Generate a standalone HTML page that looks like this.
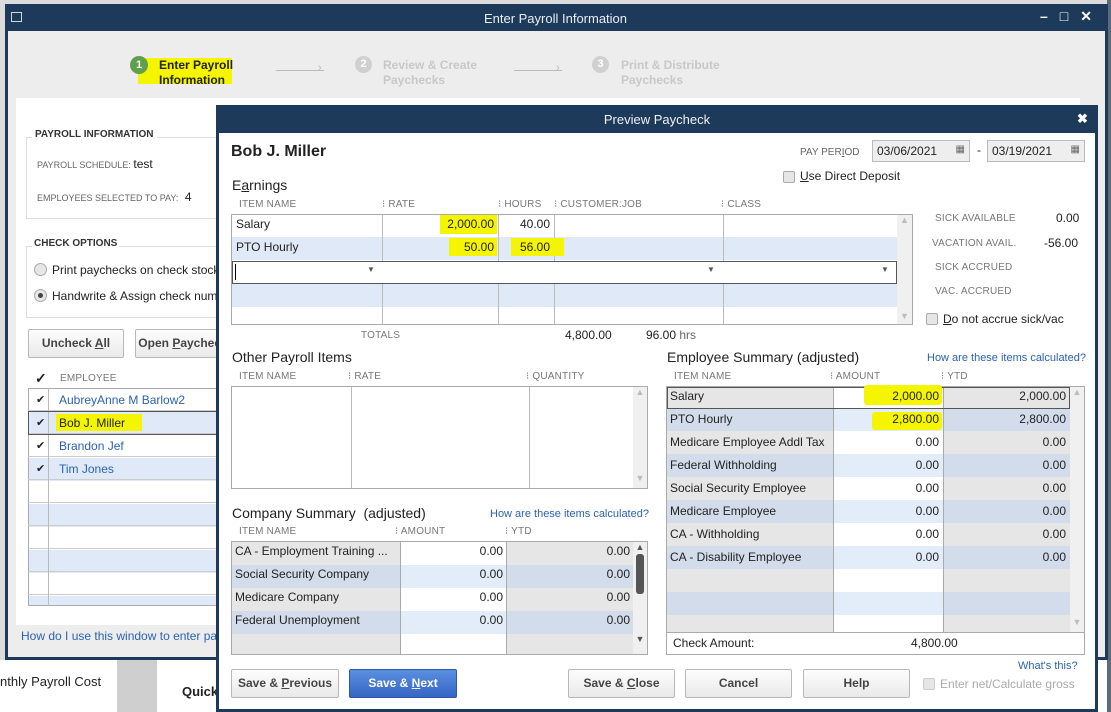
<!DOCTYPE html>
<html><head><meta charset="utf-8"><style>
*{box-sizing:border-box;margin:0;padding:0}
body{width:1111px;height:712px;overflow:hidden;position:relative;background:#e8e8e8;font-family:"Liberation Sans",sans-serif;font-size:12px;color:#222}
.a{position:absolute}
.nv{background:#1d3a5b}
.hl{background:#f5f500}
.hd{position:absolute;font-size:10px;color:#777;letter-spacing:.2px}
.btn{position:absolute;height:29px;border:1px solid #b8b8b8;background:linear-gradient(#fdfdfd,#e9e9e9);font-weight:bold;color:#444;font-size:12px;text-align:center;line-height:27px;border-radius:2px}
.r{position:absolute;height:23px;line-height:23px;font-size:12px}
.lnk{color:#2a62b0}
.cb{position:absolute;width:12px;height:12px;border:1px solid #aaa;background:#e6e6e6;border-radius:2px}
</style></head><body>
<div class="a" style="left:0;top:0;width:1111px;height:712px;background:#dcdcdc"></div>
<div class="a" style="left:0;top:660px;width:1111px;height:52px;background:#fff"></div>
<div class="a" style="left:0;top:674px;font-size:13px">nthly Payroll Cost</div>
<div class="a" style="left:117px;top:660px;width:40px;height:52px;background:#cfcfcf"></div>
<div class="a" style="left:182px;top:684px;font-weight:bold;font-size:13px">Quick</div>
<div class="a" style="left:1107px;top:0;width:4px;height:712px;background:#5b6b7b"></div>
<div class="a nv" style="left:5px;top:4px;width:1103px;height:656px"></div>
<div class="a" style="left:8px;top:31px;width:1097px;height:626px;background:#ededed"></div>
<div class="a" style="left:11px;top:12px;width:11px;height:10px;border:1px solid #cfd6de"></div>
<div class="a" style="left:0;top:11px;width:1111px;text-align:center;color:#e8eef5;font-size:13px">Enter Payroll Information</div>
<div class="a" style="left:1040px;top:8px;color:#fff;font-size:14px;letter-spacing:12px;font-weight:bold">–□✕</div>
<div class="a hl" style="left:138px;top:58px;width:94px;height:26px"></div>
<div class="a" style="left:130px;top:56px;width:18px;height:18px;border-radius:50%;background:#5fa04a;color:#fff;font-weight:bold;text-align:center;line-height:18px;font-size:11px">1</div>
<div class="a" style="left:159px;top:58px;font-weight:bold;font-size:12px;line-height:15px">Enter Payroll<br>Information</div>
<div class="a" style="left:276px;top:70px;width:48px;height:1px;background:#bbb"></div>
<div class="a" style="left:318px;top:62px;color:#bbb;font-size:11px">›</div>
<div class="a" style="left:355px;top:56px;width:17px;height:17px;border-radius:50%;background:#d0d0d0;color:#fff;font-weight:bold;text-align:center;line-height:17px;font-size:11px">2</div>
<div class="a" style="left:383px;top:58px;font-weight:bold;color:#c8c8c8;line-height:15px">Review &amp; Create<br>Paychecks</div>
<div class="a" style="left:514px;top:70px;width:48px;height:1px;background:#bbb"></div>
<div class="a" style="left:556px;top:62px;color:#bbb;font-size:11px">›</div>
<div class="a" style="left:592px;top:56px;width:17px;height:17px;border-radius:50%;background:#d0d0d0;color:#fff;font-weight:bold;text-align:center;line-height:17px;font-size:11px">3</div>
<div class="a" style="left:621px;top:58px;font-weight:bold;color:#c8c8c8;line-height:15px">Print &amp; Distribute<br>Paychecks</div>
<div class="a" style="left:16px;top:98px;width:1064px;height:527px;background:#fff"></div>
<div class="a" style="left:26px;top:137px;width:200px;height:82px;border:1px solid #ddd"></div>
<div class="a" style="left:32px;top:129px;background:#fff;padding:0 3px;font-size:10px;font-weight:bold;color:#333">PAYROLL INFORMATION</div>
<div class="a" style="left:37px;top:157px;font-size:9px;color:#666">PAYROLL SCHEDULE: <span style="font-size:12px;color:#222">test</span></div>
<div class="a" style="left:37px;top:190px;font-size:9px;color:#666">EMPLOYEES SELECTED TO PAY: <span style="font-size:12px;color:#222;margin-left:4px">4</span></div>
<div class="a" style="left:26px;top:246px;width:200px;height:72px;border:1px solid #ddd"></div>
<div class="a" style="left:32px;top:238px;background:#fff;padding:0 2px;font-size:10px;font-weight:bold;color:#333">CHECK OPTIONS</div>
<div class="a" style="left:34px;top:263px;width:13px;height:13px;border-radius:50%;border:1px solid #aaa;background:#e6e6e6"></div>
<div class="a" style="left:52px;top:263px">Print paychecks on check stock</div>
<div class="a" style="left:34px;top:289px;width:13px;height:13px;border-radius:50%;border:1px solid #aaa;background:#e6e6e6"><div style="margin:3px;width:5px;height:5px;border-radius:50%;background:#444"></div></div>
<div class="a" style="left:52px;top:289px">Handwrite &amp; Assign check numbers</div>
<div class="btn" style="left:28px;top:329px;width:96px">Uncheck <u>A</u>ll</div>
<div class="btn" style="left:135px;top:329px;width:96px">Open <u>P</u>aycheck</div>
<div class="a" style="left:35px;top:370px;font-weight:bold;font-size:14px">✓</div>
<div class="hd" style="left:60px;top:373px">EMPLOYEE</div>
<div class="a" style="left:28px;top:388px;width:190px;height:218px;border:1px solid #aaa;background:repeating-linear-gradient(#fff 0 23px,#dfe9f7 23px 46px)"></div>
<div class="a" style="left:28px;top:388px;width:190px;height:218px;background:repeating-linear-gradient(transparent 0 22px,#ccc 22px 23px)"></div>
<div class="a" style="left:48px;top:388px;width:1px;height:218px;background:#bbb"></div>
<div class="a" style="left:28px;top:411px;width:190px;height:24px;border:1px solid #555"></div>
<div class="a hl" style="left:56px;top:414px;width:86px;height:17px"></div>
<div class="r" style="left:36px;top:389px;font-size:11px">✔</div><div class="r lnk" style="left:59px;top:389px">AubreyAnne M Barlow2</div>
<div class="r" style="left:36px;top:412px;font-size:11px">✔</div><div class="r" style="left:59px;top:412px">Bob J. Miller</div>
<div class="r" style="left:36px;top:435px;font-size:11px">✔</div><div class="r lnk" style="left:59px;top:435px">Brandon Jef</div>
<div class="r" style="left:36px;top:458px;font-size:11px">✔</div><div class="r lnk" style="left:59px;top:458px">Tim Jones</div>
<div class="a lnk" style="left:21px;top:629px">How do I use this window to enter paychecks?</div>
<div class="a nv" style="left:216px;top:105px;width:882px;height:607px"></div>
<div class="a" style="left:219px;top:133px;width:876px;height:576px;background:#fff"></div>
<div class="a" style="left:216px;top:112px;width:882px;text-align:center;color:#eef2f7;font-size:13px">Preview Paycheck</div>
<div class="a" style="left:1077px;top:111px;color:#fff;font-weight:bold;font-size:13px">✖</div>
<div class="a" style="left:231px;top:143px;font-weight:bold;font-size:16px">Bob J. Miller</div>
<div class="a" style="left:800px;top:147px;font-size:10px;color:#666">PAY PER<u>I</u>OD</div>
<div class="a" style="left:872px;top:140px;width:98px;height:22px;border:1px solid #bbb;background:#eee;padding:3px 4px;font-size:12px">03/06/2021 <span style="float:right;color:#666;font-size:10px">▦</span></div>
<div class="a" style="left:977px;top:143px">-</div>
<div class="a" style="left:987px;top:140px;width:98px;height:22px;border:1px solid #bbb;background:#eee;padding:3px 4px;font-size:12px">03/19/2021 <span style="float:right;color:#666;font-size:10px">▦</span></div>
<div class="cb" style="left:783px;top:171px"></div>
<div class="a" style="left:800px;top:169px"><u>U</u>se Direct Deposit</div>
<div class="a" style="left:232px;top:177px;font-size:14px">E<u>a</u>rnings</div>
<div class="hd" style="left:239px;top:199px">ITEM NAME</div>
<div class="hd" style="left:382px;top:199px">⁝ RATE</div>
<div class="hd" style="left:498px;top:199px">⁝ HOURS</div>
<div class="hd" style="left:554px;top:199px">⁝ CUSTOMER:JOB</div>
<div class="hd" style="left:721px;top:199px">⁝ CLASS</div>
<div class="a" style="left:231px;top:214px;width:682px;height:111px;border:1px solid #aaa;background:#fff"></div>
<div class="a" style="left:232px;top:237px;width:665px;height:23px;background:#dfe9f7"></div>
<div class="a" style="left:232px;top:284px;width:665px;height:23px;background:#dfe9f7"></div>
<div class="a" style="left:382px;top:215px;width:1px;height:109px;background:#bbb"></div>
<div class="a" style="left:498px;top:215px;width:1px;height:109px;background:#bbb"></div>
<div class="a" style="left:554px;top:215px;width:1px;height:109px;background:#bbb"></div>
<div class="a" style="left:723px;top:215px;width:1px;height:109px;background:#bbb"></div>
<div class="a" style="left:897px;top:215px;width:15px;height:109px;background:#f0f0f0;color:#bbb;font-size:9px;text-align:center">▲<div style="margin-top:86px">▼</div></div>
<div class="a" style="left:232px;top:261px;width:665px;height:23px;border:1px solid #555;background:#fff"></div>
<div class="a" style="left:235px;top:264px;width:1px;height:16px;background:#000"></div>
<div class="a" style="left:367px;top:265px;font-size:8px;color:#555">▼</div>
<div class="a" style="left:707px;top:265px;font-size:8px;color:#555">▼</div>
<div class="a" style="left:881px;top:265px;font-size:8px;color:#555">▼</div>
<div class="a hl" style="left:440px;top:215px;width:57px;height:19px"></div>
<div class="a hl" style="left:449px;top:238px;width:48px;height:18px"></div>
<div class="a hl" style="left:511px;top:238px;width:53px;height:18px"></div>
<div class="r" style="left:236px;top:213px">Salary</div>
<div class="r" style="left:382px;top:213px;width:112px;text-align:right">2,000.00</div>
<div class="r" style="left:498px;top:213px;width:52px;text-align:right">40.00</div>
<div class="r" style="left:236px;top:236px">PTO Hourly</div>
<div class="r" style="left:382px;top:236px;width:112px;text-align:right">50.00</div>
<div class="r" style="left:498px;top:236px;width:52px;text-align:right">56.00</div>
<div class="hd" style="left:361px;top:330px">TOTALS</div>
<div class="a" style="left:565px;top:328px">4,800.00</div>
<div class="a" style="left:646px;top:328px">96.00 <span style="color:#666">hrs</span></div>
<div class="hd" style="left:935px;top:213px">SICK AVAILABLE</div><div class="a" style="left:1056px;top:211px">0.00</div>
<div class="hd" style="left:932px;top:238px">VACATION AVAIL.</div><div class="a" style="left:1044px;top:236px">-56.00</div>
<div class="hd" style="left:935px;top:262px">SICK ACCRUED</div>
<div class="hd" style="left:935px;top:286px">VAC. ACCRUED</div>
<div class="cb" style="left:926px;top:313px"></div>
<div class="a" style="left:943px;top:312px"><u>D</u>o not accrue sick/vac</div>
<div class="a" style="left:232px;top:349px;font-size:14px">Other Payroll Items</div>
<div class="hd" style="left:239px;top:371px">ITEM NAME</div>
<div class="hd" style="left:348px;top:371px">⁝ RATE</div>
<div class="hd" style="left:526px;top:371px">⁝ QUANTITY</div>
<div class="a" style="left:231px;top:386px;width:417px;height:103px;border:1px solid #aaa"></div>
<div class="a" style="left:351px;top:387px;width:1px;height:101px;background:#bbb"></div>
<div class="a" style="left:529px;top:387px;width:1px;height:101px;background:#bbb"></div>
<div class="a" style="left:633px;top:387px;width:14px;height:101px;background:#f0f0f0;color:#bbb;font-size:9px;text-align:center">▲<div style="margin-top:76px">▼</div></div>
<div class="a" style="left:232px;top:505px;font-size:14px">Company Summary &nbsp;(adjusted)</div>
<div class="a lnk" style="left:490px;top:508px;font-size:11px">How are these items calculated?</div>
<div class="hd" style="left:239px;top:526px">ITEM NAME</div>
<div class="hd" style="left:395px;top:526px">⁝ AMOUNT</div>
<div class="hd" style="left:505px;top:526px">⁝ YTD</div>
<div class="a" style="left:231px;top:541px;width:417px;height:114px;border:1px solid #aaa;background:#e6e6e6"></div>
<div class="a" style="left:232px;top:565px;width:401px;height:23px;background:#d3dcea"></div>
<div class="a" style="left:232px;top:611px;width:401px;height:23px;background:#d3dcea"></div>
<div class="a" style="left:400px;top:542px;width:107px;height:112px;background:#fff;border-left:1px solid #aaa;border-right:1px solid #aaa"></div>
<div class="a" style="left:401px;top:565px;width:105px;height:23px;background:#e3edf9"></div>
<div class="a" style="left:401px;top:611px;width:105px;height:23px;background:#e3edf9"></div>
<div class="a" style="left:633px;top:542px;width:14px;height:112px;background:#f0f0f0;color:#555;font-size:9px;text-align:center">▲<div style="margin:2px 3px;height:40px;background:#555;border-radius:3px"></div><div style="margin-top:40px">▼</div></div>
<div class="r" style="left:235px;top:540px">CA - Employment Training ...</div>
<div class="r" style="left:235px;top:563px">Social Security Company</div>
<div class="r" style="left:235px;top:586px">Medicare Company</div>
<div class="r" style="left:235px;top:609px">Federal Unemployment</div>
<div class="r" style="left:400px;top:540px;width:103px;text-align:right;line-height:23px">0.00<br>0.00<br>0.00<br>0.00</div>
<div class="r" style="left:507px;top:540px;width:123px;text-align:right;line-height:23px">0.00<br>0.00<br>0.00<br>0.00</div>
<div class="a" style="left:667px;top:349px;font-size:14px">Employee Summary (adjusted)</div>
<div class="a lnk" style="left:927px;top:352px;font-size:11px">How are these items calculated?</div>
<div class="hd" style="left:674px;top:371px">ITEM NAME</div>
<div class="hd" style="left:830px;top:371px">⁝ AMOUNT</div>
<div class="hd" style="left:941px;top:371px">⁝ YTD</div>
<div class="a" style="left:666px;top:386px;width:419px;height:269px;border:1px solid #aaa;background:#e6e6e6"></div>
<div class="a" style="left:667px;top:408px;width:403px;height:224px;background:repeating-linear-gradient(#d3dcea 0 23px,#e6e6e6 23px 46px)"></div>
<div class="a" style="left:833px;top:387px;width:111px;height:245px;background:#fff;border-left:1px solid #aaa;border-right:1px solid #aaa"></div>
<div class="a" style="left:834px;top:408px;width:109px;height:224px;background:repeating-linear-gradient(#e3edf9 0 23px,#fff 23px 46px)"></div>
<div class="a" style="left:667px;top:387px;width:403px;height:22px;border:1px solid #555"></div>
<div class="a" style="left:1070px;top:387px;width:14px;height:245px;background:#f0f0f0;color:#bbb;font-size:9px;text-align:center">▲<div style="margin-top:220px">▼</div></div>
<div class="a" style="left:667px;top:632px;width:417px;height:1px;background:#aaa"></div>
<div class="a" style="left:667px;top:633px;width:417px;height:21px;background:#fff"></div>
<div class="a hl" style="left:864px;top:385px;width:78px;height:20px;border-radius:3px"></div>
<div class="a hl" style="left:872px;top:412px;width:70px;height:18px;border-radius:3px"></div>
<div class="r" style="left:670px;top:385px;line-height:23px">Salary<br>PTO Hourly<br>Medicare Employee Addl Tax<br>Federal Withholding<br>Social Security Employee<br>Medicare Employee<br>CA - Withholding<br>CA - Disability Employee</div>
<div class="r" style="left:833px;top:385px;width:106px;text-align:right;line-height:23px">2,000.00<br>2,800.00<br>0.00<br>0.00<br>0.00<br>0.00<br>0.00<br>0.00</div>
<div class="r" style="left:944px;top:385px;width:122px;text-align:right;line-height:23px">2,000.00<br>2,800.00<br>0.00<br>0.00<br>0.00<br>0.00<br>0.00<br>0.00</div>
<div class="a" style="left:673px;top:636px">Check Amount:</div>
<div class="a" style="left:911px;top:636px">4,800.00</div>
<div class="btn" style="left:231px;top:669px;width:108px">Save &amp; <u>P</u>revious</div>
<div class="btn" style="left:349px;top:669px;width:108px;background:linear-gradient(#5a8fe0,#3566c4);border-color:#2c58a8;color:#fff">Save &amp; <u>N</u>ext</div>
<div class="btn" style="left:568px;top:669px;width:107px">Save &amp; <u>C</u>lose</div>
<div class="btn" style="left:685px;top:669px;width:107px">Cancel</div>
<div class="btn" style="left:803px;top:669px;width:107px">Help</div>
<div class="a lnk" style="left:1018px;top:660px;font-size:11px">What's this?</div>
<div class="cb" style="left:923px;top:678px;border-color:#ccc"></div>
<div class="a" style="left:940px;top:677px;color:#aaa">Enter net/Calculate <u>g</u>ross</div>
</body></html>
